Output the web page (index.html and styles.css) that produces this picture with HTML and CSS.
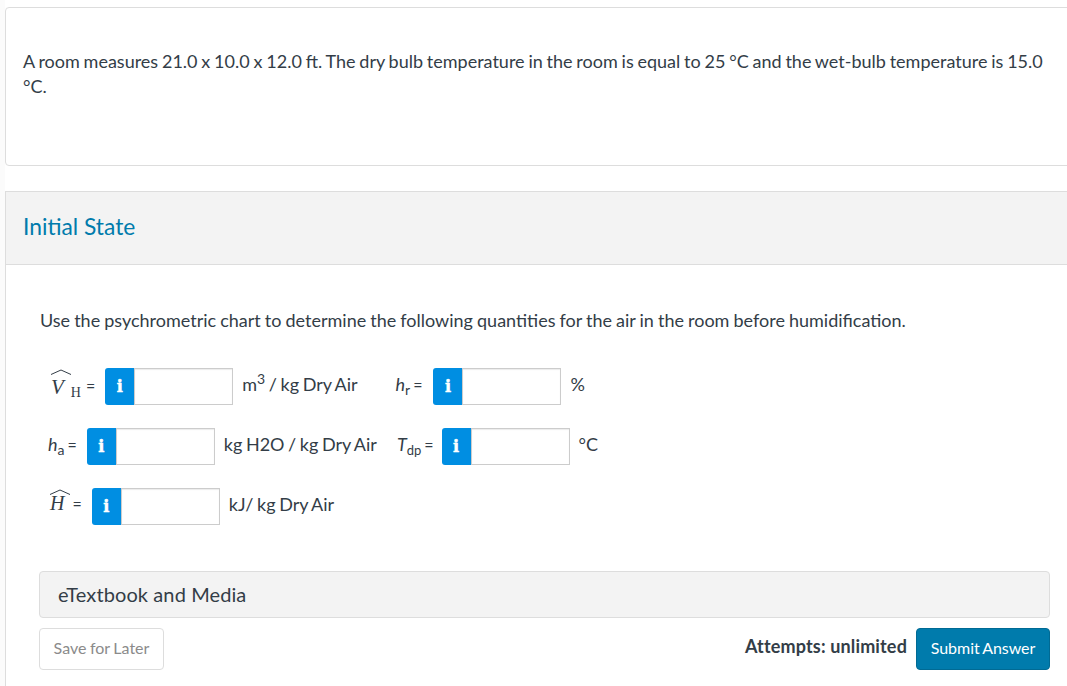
FILE: index.html
```html
<!DOCTYPE html>
<html lang="en">
<head>
  <meta charset="UTF-8" />
  <title>Initial State</title>
  <link rel="stylesheet" href="styles.css">
</head>
<body>
  <div class="page">
    <div class="problem">
      <p>A room measures 21.0 x 10.0 x 12.0 ft. The dry bulb temperature in the room is equal to 25 °C and the wet-bulb temperature is 15.0 °C.</p>
    </div>

    <div class="part">
      <h2 class="part-title">Initial State</h2>

      <div class="part-body">
        <p class="intro">Use the psychrometric chart to determine the following quantities for the air in the room before humidification.</p>

        <div class="row">
          <span class="label label-v"><span class="hat-var">
            <svg class="hat" viewBox="0 0 20 6"><path d="M0 5.5 10 1l10 4.5" /></svg>V</span><span class="serif-sub">H</span><span class="eq">=</span></span>
          <div class="field"><span class="info">i</span><input type="text" /></div>
          <span class="unit unit-v">m<sup>3</sup> / kg Dry Air</span>
          <span class="label label-r"><i>h</i><sub>r</sub><span class="eq">=</span></span>
          <div class="field"><span class="info">i</span><input type="text" /></div>
          <span class="unit">%</span>
        </div>

        <div class="row">
          <span class="label"><i>h</i><sub>a</sub><span class="eq">=</span></span>
          <div class="field"><span class="info">i</span><input type="text" /></div>
          <span class="unit unit-ha">kg H2O / kg Dry Air</span>
          <span class="label label-t"><i>T</i><sub>dp</sub><span class="eq">=</span></span>
          <div class="field"><span class="info">i</span><input type="text" /></div>
          <span class="unit">°C</span>
        </div>

        <div class="row">
          <span class="label label-h"><span class="hat-var">
            <svg class="hat" viewBox="0 0 20 6"><path d="M0 5.5 10 1l10 4.5" /></svg>H</span><span class="eq eq-wide">=</span></span>
          <div class="field"><span class="info">i</span><input type="text" /></div>
          <span class="unit">kJ/ kg Dry Air</span>
        </div>

        <div class="media">eTextbook and Media</div>

        <div class="actions">
          <button type="button" class="btn-save">Save for Later</button>
          <span class="attempts">Attempts: unlimited</span>
          <button type="button" class="btn-submit">Submit Answer</button>
        </div>
      </div>
    </div>
  </div>
</body>
</html>
```

FILE: styles.css
```css
html, body {
  margin: 0;
  height: 686px;
  overflow: hidden;
  background: #fbfbfb;
}

body {
  color: #333d47;
  font-family: "Lato", sans-serif;
  font-size: 18px;
}

.page {
  width: 1075px;
  height: 686px;
  margin-left: 5px;
  padding-top: 7px;
  background: white;
}

.problem {
  box-sizing: border-box;
  height: 159px;
  padding: 41px 32px 0 17px;
  border: 1px solid #ddd;
  border-radius: 4px;
}

.problem p {
  width: 1024px;
  margin: 0;
  line-height: 25px;
  word-spacing: -0.8px;
}

.part {
  box-sizing: border-box;
  height: 520px;
  margin-top: 25px;
  border-left: 1px solid #ddd;
}

.part-title {
  box-sizing: border-box;
  height: 74px;
  margin: 0;
  padding-left: 17px;
  border-top: 1px solid #ddd;
  border-bottom: 1px solid #ddd;
  background: #f3f3f3;
  color: #007bac;
  font-size: 22.8px;
  font-weight: normal;
  line-height: 68px;
}

.part-body {
  width: 1011px;
  padding-left: 33px;
}

.intro {
  margin: 43px 0 0 1px;
  line-height: 24px;
  word-spacing: -0.55px;
}

.row {
  display: flex;
  align-items: center;
  height: 37px;
  margin-top: 23px;
}

.intro + .row {
  margin-top: 36px;
}

.label {
  display: flex;
  align-items: baseline;
  margin-bottom: 6px;
  margin-left: 9px;
  margin-right: 10px;
  white-space: nowrap;
}

.label-v {
  margin-top: 2px;
  margin-bottom: 0;
  margin-left: 12px;
}

.label-h {
  margin-left: 11px;
}

.label-r {
  margin-right: 11px;
}

.label-t {
  margin-right: 8px;
}

.label sub {
  position: relative;
  top: 4px;
  font-size: 14px;
  line-height: 0;
  vertical-align: baseline;
}

.label-t sub {
  font-size: 13px;
}

.eq {
  margin-left: 3px;
  font-size: 16px;
}

.eq-wide {
  margin-left: 8px;
}

.label-v .eq {
  position: relative;
  top: -2px;
  margin-left: 5px;
}

.hat-var {
  position: relative;
  font-family: "Liberation Serif", serif;
  font-size: 20px;
  font-style: italic;
}

.label-v .hat-var {
  font-size: 21px;
}

.hat {
  position: absolute;
  left: 0;
  top: -3px;
  width: 20px;
  height: 6px;
  fill: none;
  stroke: #333d47;
  stroke-width: 1;
}

.label-v .hat {
  top: -6px;
}

.serif-sub {
  position: relative;
  top: 3px;
  margin-left: 7px;
  font-family: "Liberation Serif", serif;
  font-size: 14px;
}

.field {
  display: flex;
  flex: none;
  width: 128px;
  height: 37px;
}

.info {
  flex: none;
  width: 29px;
  border-radius: 3px 0 0 3px;
  background: #008ee2;
  color: white;
  font-family: "DejaVu Serif", serif;
  font-size: 16px;
  font-weight: bold;
  line-height: 37px;
  text-align: center;
  -webkit-text-stroke: 0.5px white;
}

.field input {
  box-sizing: border-box;
  width: 99px;
  height: 37px;
  padding: 0;
  border: 1px solid #ccc;
  border-radius: 0;
  box-shadow: inset 0 1px 1px rgba(0,0,0,0.08);
  outline: none;
}

.unit {
  margin-bottom: 6px;
  margin-left: 9px;
  white-space: nowrap;
  word-spacing: -1px;
}

.unit sup {
  font-size: 14px;
  line-height: 0;
}

.unit-v {
  margin-right: 29px;
}

.unit-ha {
  margin-right: 11px;
}

.media {
  box-sizing: border-box;
  height: 47px;
  margin-top: 46px;
  padding-left: 18px;
  border: 1px solid #ddd;
  border-radius: 4px;
  background: #f3f3f3;
  font-size: 20px;
  letter-spacing: 0.1px;
  line-height: 45px;
}

.actions {
  display: flex;
  align-items: center;
  margin-top: 10px;
}

button {
  height: 42px;
  padding: 0 0 4px;
  border-radius: 4px;
  font-family: "Lato", sans-serif;
  font-size: 16px;
  word-spacing: -0.6px;
}

.btn-save {
  width: 125px;
  border: 1px solid #ddd;
  background: white;
  color: #8b8b8b;
}

.attempts {
  margin-left: auto;
  margin-right: 9px;
  margin-top: -7px;
  font-weight: bold;
  letter-spacing: 0.15px;
}

.btn-submit {
  width: 134px;
  border: 1px solid #006a94;
  background: #007bac;
  color: white;
  letter-spacing: -0.05px;
  word-spacing: -1px;
}
```
